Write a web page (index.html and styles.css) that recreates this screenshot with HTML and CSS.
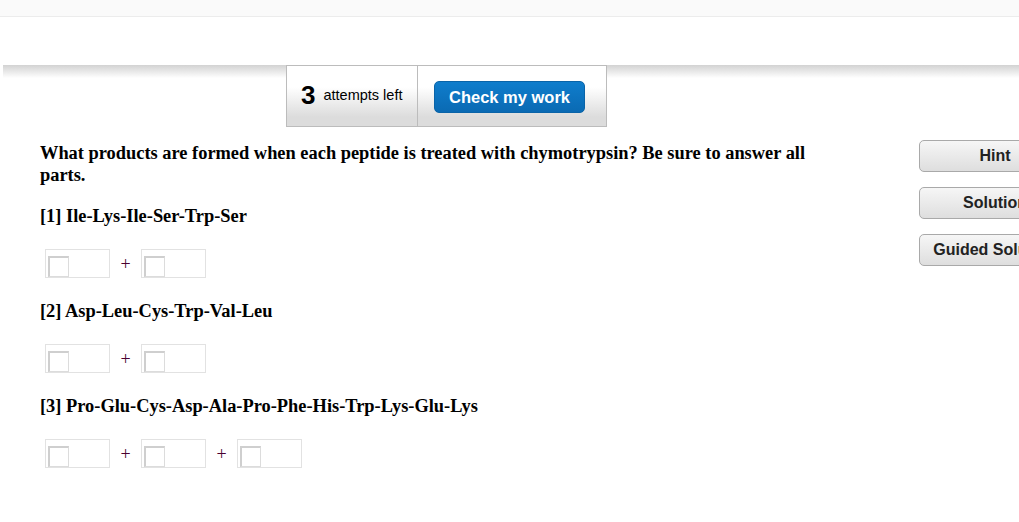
FILE: index.html
```html
<!DOCTYPE html>
<html>
<head>
<meta charset="utf-8">
<link rel="stylesheet" href="styles.css">
</head>
<body>
<div class="topband"></div>
<div class="header">
  <div class="attempts-box">
    <div class="attempts"><span class="num">3</span><span class="label">attempts left</span></div>
    <div class="check-cell"><button class="check">Check my work</button></div>
  </div>
</div>
<div class="main">
  <div class="content">
    <p class="question">What products are formed when each peptide is treated with chymotrypsin? Be sure to answer all parts.</p>
    <p class="part">[1] Ile-Lys-Ile-Ser-Trp-Ser</p>
    <div class="answers">
      <span class="box"><span class="inner"></span></span><span class="plus">+</span><span class="box"><span class="inner"></span></span>
    </div>
    <p class="part">[2] Asp-Leu-Cys-Trp-Val-Leu</p>
    <div class="answers">
      <span class="box"><span class="inner"></span></span><span class="plus">+</span><span class="box"><span class="inner"></span></span>
    </div>
    <p class="part">[3] Pro-Glu-Cys-Asp-Ala-Pro-Phe-His-Trp-Lys-Glu-Lys</p>
    <div class="answers">
      <span class="box"><span class="inner"></span></span><span class="plus">+</span><span class="box"><span class="inner"></span></span><span class="plus">+</span><span class="box"><span class="inner"></span></span>
    </div>
  </div>
  <div class="side">
    <button class="sidebtn">Hint</button>
    <button class="sidebtn">Solution</button>
    <button class="sidebtn">Guided Solution</button>
  </div>
</div>
</body>
</html>
```
FILE: styles.css
```css
html, body {
  margin: 0;
  padding: 0;
  background: #fff;
  overflow: hidden;
  width: 1019px;
  height: 522px;
}
body {
  font-family: "Liberation Serif", "Times New Roman", serif;
  color: #000;
}
.topband {
  height: 16px;
  background: #fafafa;
  border-bottom: 1px solid #ececec;
}
.header {
  margin-top: 48px;
  margin-left: 3px;
  height: 62px;
  background: linear-gradient(#d2d2d2, #ffffff 13px) no-repeat;
  display: flex;
}
.attempts-box {
  margin-left: 283px;
  display: flex;
  border: 1px solid #bcbcbc;
  height: 60px;
  background: linear-gradient(#ffffff 35%, #dcdcdc 85%);
}
.attempts {
  width: 131px;
  border-right: 1px solid #bcbcbc;
  display: flex;
  align-items: baseline;
  padding-left: 14px;
  box-sizing: border-box;
  padding-top: 14px;
  font-family: "Liberation Sans", Arial, sans-serif;
}
.num {
  font-size: 26px;
  font-weight: bold;
  margin-right: 8px;
}
.label {
  font-size: 14.5px;
  position: relative;
  top: -4px;
}
.check-cell {
  width: 188px;
  display: flex;
  align-items: flex-start;
  padding-left: 16px;
  padding-top: 15px;
  box-sizing: border-box;
}
.check {
  width: 151px;
  height: 32px;
  border: 1px solid #0a64a8;
  border-radius: 5px;
  background: linear-gradient(#0f7dcc, #0a6ab3);
  color: #fff;
  font-family: "Liberation Sans", Arial, sans-serif;
  font-weight: bold;
  font-size: 16.5px;
  padding: 0;
}
.main {
  display: flex;
  padding-top: 13px;
}
.content {
  width: 790px;
  padding-left: 40px;
  flex-shrink: 0;
}
.question, .part {
  margin: 0;
  font-weight: bold;
  font-size: 18.4px;
  line-height: 22px;
}
.question {
  margin-top: 2px;
  margin-bottom: 19px;
}
.part {
  margin-bottom: 22px;
}
.answers {
  display: flex;
  align-items: center;
  padding-left: 5px;
  margin-bottom: 22px;
  height: 29px;
}
.box {
  width: 61px;
  height: 27px;
  border: 1px solid #e2e2e2;
  display: flex;
  align-items: flex-end;
  padding-left: 2px;
  box-sizing: content-box;
}
.inner {
  width: 18px;
  height: 18px;
  border: 1px solid #dcdcdc;
  border-left: 2px solid #cfcfcf;
  border-top: 2px solid #cfcfcf;
  background: #fff;
}
.plus {
  font-size: 18px;
  color: #4a0030;
  width: 31px;
  text-align: center;
  position: relative;
  top: 1px;
}
.side {
  margin-left: 89px;
  flex-shrink: 0;
  display: flex;
  flex-direction: column;
  gap: 15px;
}
.sidebtn {
  width: 152px;
  height: 32px;
  border: 1px solid #a9a9a9;
  border-radius: 5px;
  background: linear-gradient(#f6f6f6, #dedede);
  font-family: "Liberation Sans", Arial, sans-serif;
  font-weight: bold;
  font-size: 16px;
  color: #222;
  padding: 0;
  white-space: nowrap;
  overflow: hidden;
  text-align: center;
}
```
